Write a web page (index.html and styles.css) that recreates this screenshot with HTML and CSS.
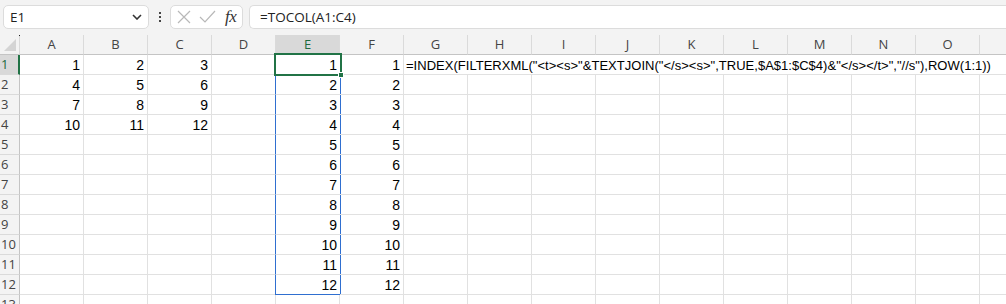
FILE: index.html
```html
<!DOCTYPE html>
<html>
<head>
<meta charset="utf-8">
<link rel="stylesheet" href="styles.css">
</head>
<body>
<div class="topbar">
  <div class="namebox">
    <span class="name">E1</span>
    <svg class="chev" width="10" height="6" viewBox="0 0 10 6"><path d="M1 1 L5 5 L9 1" fill="none" stroke="#333" stroke-width="1.6"/></svg>
  </div>
  <div class="dots"><i></i><i></i><i></i></div>
  <div class="fxbox">
    <svg width="14" height="14" viewBox="0 0 14 14"><path d="M1 1 L13 13 M13 1 L1 13" stroke="#b8b8b8" stroke-width="1.2" fill="none"/></svg>
    <svg width="17" height="13" viewBox="0 0 17 13"><path d="M1 7 L6 12 L16 1" stroke="#b8b8b8" stroke-width="1.2" fill="none"/></svg>
    <span class="fx">fx</span>
  </div>
  <div class="formula">=TOCOL(A1:C4)</div>
</div>
<div class="sheet">
  <div class="corner"><span class="tri"></span></div>
  <div class="ch">A</div><div class="ch">B</div><div class="ch">C</div><div class="ch">D</div><div class="ch sel">E</div><div class="ch">F</div><div class="ch">G</div><div class="ch">H</div><div class="ch">I</div><div class="ch">J</div><div class="ch">K</div><div class="ch">L</div><div class="ch">M</div><div class="ch">N</div><div class="ch">O</div><div class="ch">P</div>
</div>
<div class="sheet body" id="body"></div>
<script src="app.js"></script>
</body>
</html>
```
FILE: app.js
```js
const body = document.getElementById('body');
const data = {1:[1,2,3],2:[4,5,6],3:[7,8,9],4:[10,11,12]};
let html = '';
for (let r = 1; r <= 13; r++) {
  html += `<div class="rh${r===1?' sel':''}">${r}</div>`;
  for (let c = 0; c < 16; c++) {
    let v = '';
    let cls = 'cell';
    if (c < 3 && data[r]) v = data[r][c];
    if ((c === 4 || c === 5) && r <= 12) v = r;
    if (c === 4 && r <= 12) cls += ' spill';
    if (c === 4 && r === 12) cls += ' spillend';
    if (c === 4 && r === 1) cls += ' active';
    if (r === 1 && c === 6) {
      html += `<div class="cell text span">=INDEX(FILTERXML("&lt;t&gt;&lt;s&gt;"&amp;TEXTJOIN("&lt;/s&gt;&lt;s&gt;",TRUE,$A$1:$C$4)&amp;"&lt;/s&gt;&lt;/t&gt;","//s"),ROW(1:1))</div>`;
      break;
    }
    html += `<div class="${cls}">${v}</div>`;
  }
}
body.innerHTML = html;
```
FILE: styles.css
```css
html, body { margin: 0; padding: 0; }
body {
  width: 1006px; height: 304px; overflow: hidden;
  background: #fff;
  font-family: "Liberation Sans", Arial, sans-serif;
}
.topbar {
  display: flex; align-items: center;
  height: 35px; box-sizing: border-box;
  padding: 3px 0 5px 3px;
  background: #f3f3f3;
  gap: 0;
}
.namebox {
  width: 146px; height: 24px; box-sizing: border-box;
  background: #fff; border: 1px solid #dcdcdc; border-radius: 5px;
  display: flex; align-items: center; justify-content: space-between;
  padding: 0 6px 0 6px;
}
.name { font-family: "Open Sans", sans-serif; font-size: 13.5px; color: #222; }
.chev { margin-top: 1px; }
.dots { width: 21px; display: flex; flex-direction: column; align-items: center; gap: 2px; }
.dots i { width: 2px; height: 2px; background: #444; display: block; }
.fxbox {
  width: 73px; height: 24px; box-sizing: border-box;
  background: #fff; border: 1px solid #dcdcdc; border-radius: 5px;
  display: flex; align-items: center; gap: 8px; padding-left: 6px;
}
.fx { font-family: "Liberation Serif", serif; font-style: italic; font-size: 17px; color: #333; margin-left: 1px; letter-spacing: -0.5px; }
.formula {
  margin-left: 6px; flex: 1; height: 24px; box-sizing: border-box;
  background: #fff; border: 1px solid #dcdcdc; border-right: none; border-radius: 5px 0 0 5px;
  font-family: "Open Sans", sans-serif; font-size: 13.5px; color: #222;
  display: flex; align-items: center; padding-left: 10px;
}
.sheet {
  display: grid;
  grid-template-columns: 20px repeat(16, 64px);
  grid-auto-rows: 20px;
  width: 1044px;
}
.corner, .ch {
  height: 20px; box-sizing: border-box; background: #f3f3f3;
  border-bottom: 1px solid #c4c4c4;
}
.corner { position: relative; border-right: 1px solid #dadada; }
.corner::after {
  content: ""; position: absolute; right: -1px; top: 0; width: 1px; height: 1px; background: #222;
}
.tri {
  position: absolute; right: 3px; bottom: 3px;
  width: 0; height: 0;
  border-left: 12px solid transparent; border-bottom: 12px solid #d4d4d4;
}
.ch {
  border-right: 1px solid #dadada;
  text-align: center; font-family: "Open Sans", sans-serif; font-size: 13px; color: #444;
  line-height: 19px;
}
.ch.sel { background: #d9d9d9; color: #1e6b3f; border-bottom: 2px solid #217346; }
.rh {
  box-sizing: border-box; background: #f3f3f3;
  border-right: 1px solid #c4c4c4; border-bottom: 1px solid #dadada;
  font-family: "Open Sans", sans-serif; font-size: 13px; color: #444;
  line-height: 19px; padding-left: 1px;
}
.rh.sel { background: #d9d9d9; color: #1e6b3f; border-right: 2px solid #217346; }
.cell {
  box-sizing: border-box;
  border-right: 1px solid #e1e1e1; border-bottom: 1px solid #e1e1e1;
  text-align: right; padding-right: 3px;
  font-size: 14px; line-height: 21px; color: #000;
  position: relative;
}
.cell.spill { border-left: 1px solid #2f6fd0; border-right: 1px solid #2f6fd0; margin-left: -1px; margin-right: -1px; }
.cell.spillend { border-bottom: 1px solid #2f6fd0; }
.cell.active::after {
  content: ""; position: absolute; left: -2px; top: -2px; right: -2px; bottom: -2px;
  border: 2px solid #217346; pointer-events: none; z-index: 2;
}
.cell.active::before {
  content: ""; position: absolute; right: -4px; bottom: -4px; width: 6px; height: 6px;
  background: #217346; border: 1px solid #fff; z-index: 3; box-sizing: border-box;
}
.cell.text {
  grid-column: span 10; text-align: left; padding-left: 2px; white-space: nowrap; border-right: none;
  font-size: 13px; letter-spacing: 0.02px;
}
```
